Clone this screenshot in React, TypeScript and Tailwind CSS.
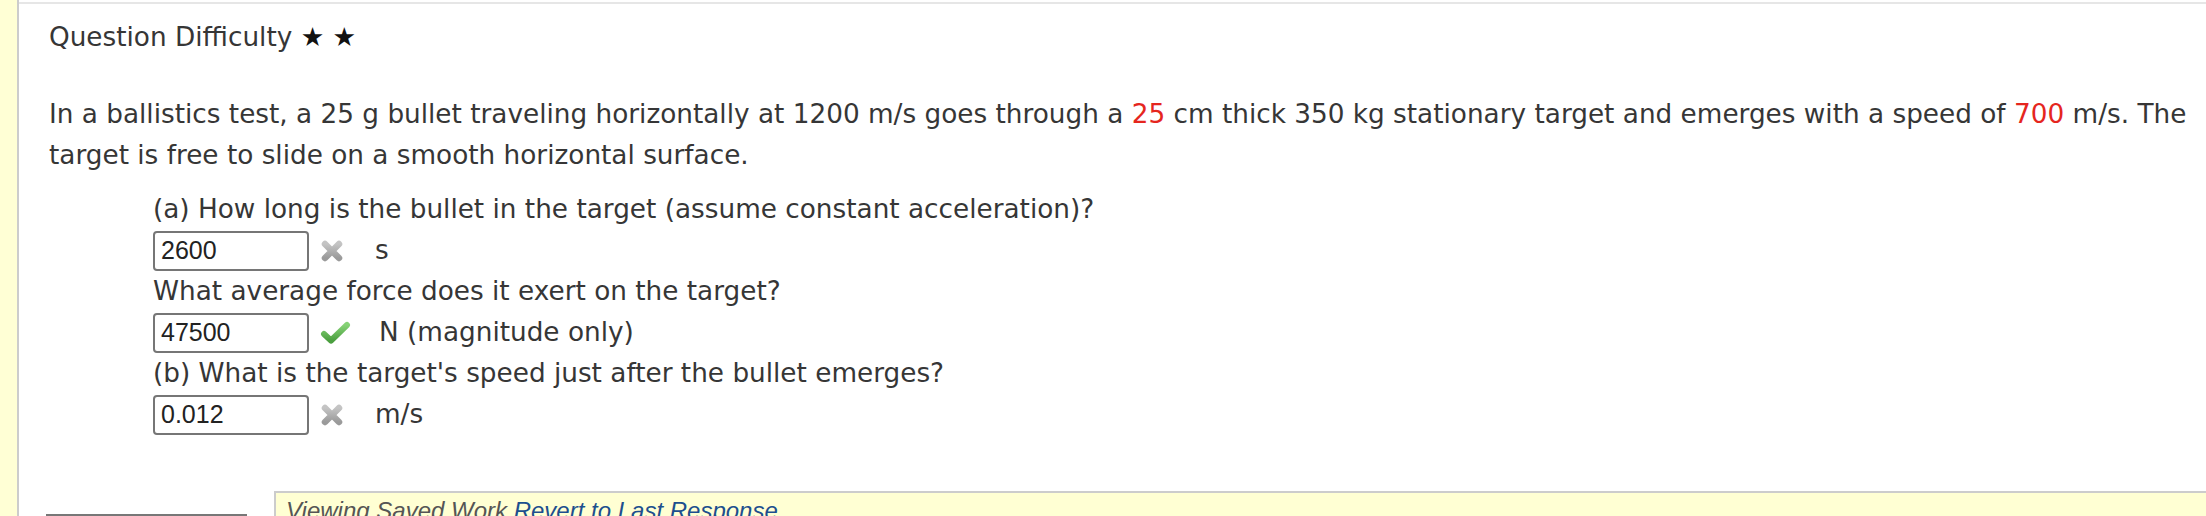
import React from 'react'

const XMark = () => (
  <svg width="24" height="24" viewBox="0 0 24 24">
    <defs>
      <linearGradient id="xg" x1="0" y1="0" x2="0" y2="1">
        <stop offset="0" stopColor="#c4c4c4" />
        <stop offset="1" stopColor="#9a9a9a" />
      </linearGradient>
    </defs>
    <path d="M5 5 L19 19 M19 5 L5 19" stroke="url(#xg)" strokeWidth="6.5" strokeLinecap="round" fill="none" />
  </svg>
)

const CheckMark = () => (
  <svg width="31" height="25" viewBox="0 0 31 25">
    <defs>
      <linearGradient id="cg" x1="0" y1="0" x2="0" y2="1">
        <stop offset="0" stopColor="#86d276" />
        <stop offset="1" stopColor="#4b9f3f" />
      </linearGradient>
    </defs>
    <path d="M4 14 L11 20.5 L27 5" stroke="url(#cg)" strokeWidth="6" strokeLinecap="round" strokeLinejoin="round" fill="none" />
  </svg>
)

function AnswerRow({ value, correct, unit }: { value: string; correct: boolean; unit: string }) {
  return (
    <div className="flex items-center h-[41px]">
      <div className="w-[156px] h-[40px] border-2 border-[#767676] rounded-[4px] flex items-center pl-[6px] text-[25px] text-[#222] font-['Liberation_Sans',Arial,sans-serif] bg-white">
        {value}
      </div>
      <div className="w-[34px] ml-[11px] flex items-center">
        {correct ? <CheckMark /> : <XMark />}
      </div>
      <span className={correct ? 'ml-[25px]' : 'ml-[21px]'}>{unit}</span>
    </div>
  )
}

export default function App() {
  return (
    <div className="flex w-[2206px] h-[516px] overflow-hidden bg-white text-[#363636] font-['DejaVu_Sans',Verdana,sans-serif] text-[26.3px] leading-[41px]">
      {/* left strip */}
      <div className="w-[19px] shrink-0 bg-[#ffffd5] border-r-2 border-[#cccccc]" />

      <div className="flex-1 mt-[2px] border-t-2 border-[#e6e6e6]">
        <div className="pl-[30px] pr-[16px] pt-[13px]">
          <div>
            Question Difficulty <span className="text-[#111]">★ ★</span>
          </div>

          <p className="mt-[36px]">
            In a ballistics test, a 25 g bullet traveling horizontally at 1200 m/s goes through a{' '}
            <span className="text-[#e5261e]">25</span> cm thick 350 kg stationary target and emerges with a speed of{' '}
            <span className="text-[#e5261e]">700</span> m/s. The target is free to slide on a smooth horizontal surface.
          </p>

          <div className="mt-[13px] pl-[104px]">
            <div>(a) How long is the bullet in the target (assume constant acceleration)?</div>
            <AnswerRow value="2600" correct={false} unit="s" />
            <div>What average force does it exert on the target?</div>
            <AnswerRow value="47500" correct={true} unit="N (magnitude only)" />
            <div>(b) What is the target's speed just after the bullet emerges?</div>
            <AnswerRow value="0.012" correct={false} unit="m/s" />
          </div>
        </div>

        {/* bottom bar */}
        <div className="flex items-start pl-[27px] mt-[56px]">
          <div className="w-[201px] mt-[23px] border-t-2 border-[#777]" />
          <div className="flex-1 ml-[27px] h-[40px] bg-[#ffffd3] border-t-2 border-l-2 border-[#cccccc] pl-[10px] pt-[5px] leading-[26px] italic font-['Liberation_Sans',Arial,sans-serif] text-[24px]">
            <span className="text-[#555]">Viewing Saved Work</span>{' '}
            <span className="text-[#1d4f8e]">Revert to Last Response</span>
          </div>
        </div>
      </div>
    </div>
  )
}
